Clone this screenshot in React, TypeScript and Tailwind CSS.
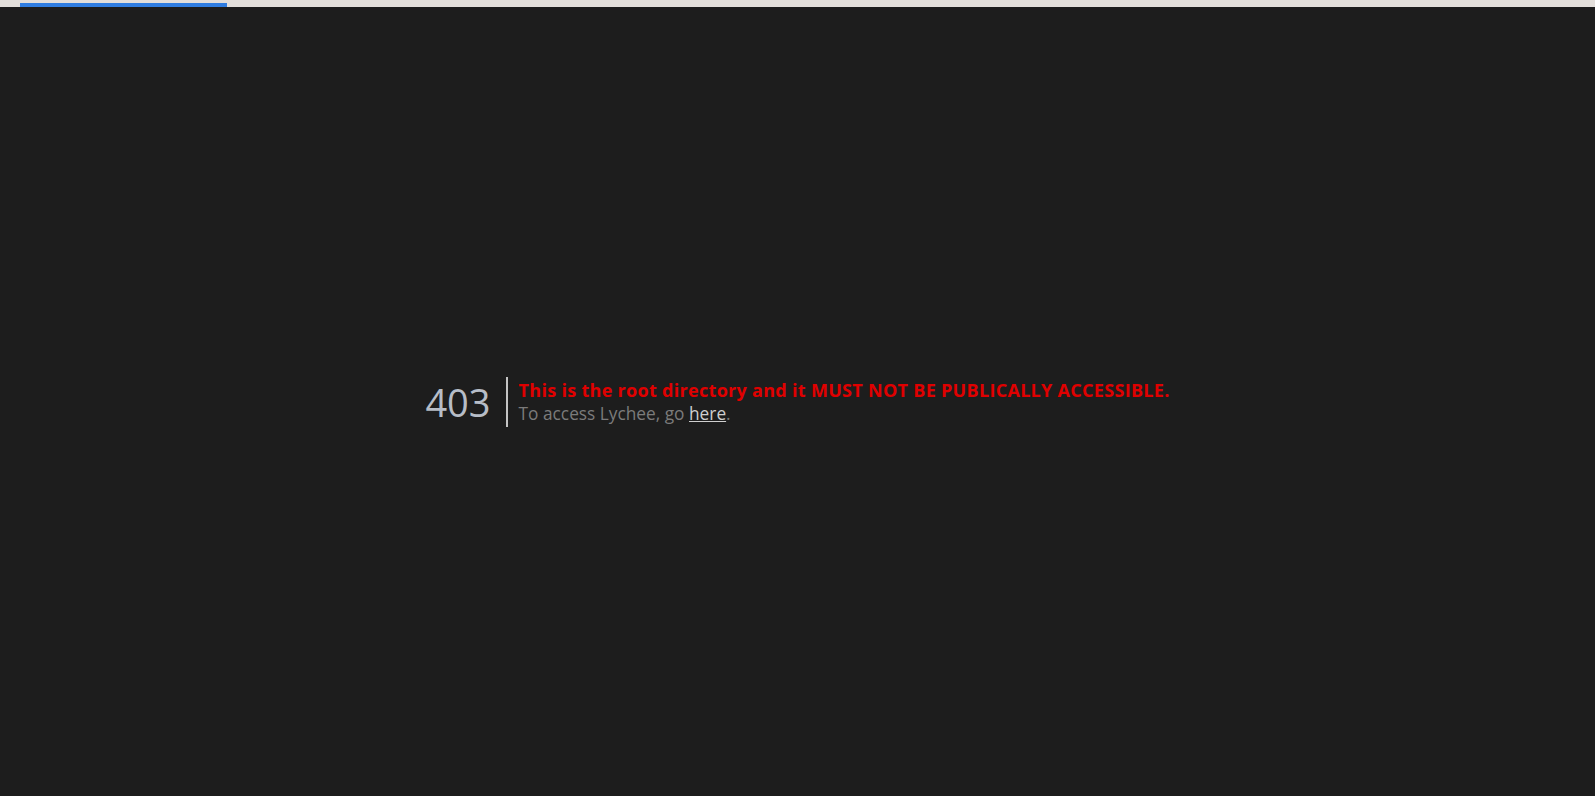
export default function App() {
    return (
        <div className="min-h-screen flex flex-col bg-[#1d1d1d] font-['Open_Sans',sans-serif]">
            {/* loading strip */}
            <div className="h-[7px] bg-[#e3dfdb] pl-[20px] pt-[3px]">
                <div className="w-[207px] h-[4px] bg-[#2f7de1]" />
            </div>

            <div className="flex-1 flex items-center justify-center">
                <div className="flex items-center">
                    <div className="text-[38px] leading-none text-[#b7bdc7] pr-[15px]">403</div>
                    <div className="border-l-2 border-[#c4c4c4] pl-[11px] py-px">
                        <p className="text-[18px] leading-[24px] font-bold tracking-[0.3px] text-[#e00000]">
                            This is the root directory and it MUST NOT BE PUBLICALLY ACCESSIBLE.
                        </p>
                        <p className="text-[17.3px] leading-[24px] text-[#7b7b7b]">
                            To access Lychee, go{" "}
                            <a href="#" className="underline text-[#cfcfcf]">
                                here
                            </a>
                            .
                        </p>
                    </div>
                </div>
            </div>
        </div>
    );
}
